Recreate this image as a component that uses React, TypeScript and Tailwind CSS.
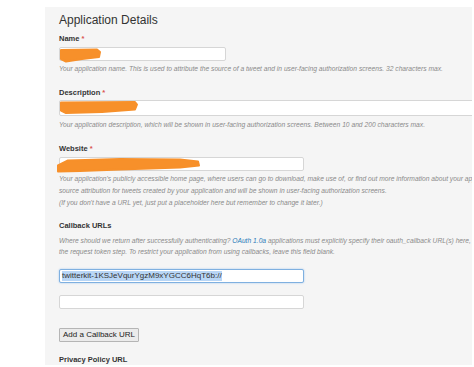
import React from "react";

function Label({ text, required = false }: { text: string; required?: boolean }) {
  return (
    <div className="text-[7.5px] leading-[10px] font-bold text-[#333]">
      {text}
      {required && <span className="text-[#d9534f]"> *</span>}
    </div>
  );
}

function Help({ children, className = "" }: { children: React.ReactNode; className?: string }) {
  return (
    <div className={`text-[6.7px] italic text-[#8a8a8a] whitespace-nowrap ${className}`}>
      {children}
    </div>
  );
}

// orange Schwärzung über dem Feldinhalt
function Redact({ points, w }: { points: string; w: number }) {
  return (
    <svg
      className="absolute left-0 top-[1px] overflow-visible"
      width={w}
      height={14}
      viewBox={`0 0 ${w} 14`}
    >
      <polygon points={points} fill="#f7902a" strokeLinejoin="round" stroke="#f7902a" strokeWidth={2} />
    </svg>
  );
}

export default function App() {
  return (
    <div className="w-[474px] h-[367px] bg-white font-['Liberation_Sans',Arial,sans-serif] pt-[7px] pl-[45px]">
      <div className="w-[427px] h-[358px] bg-[#f5f5f5] overflow-hidden pl-[14px] pt-[6px] flex flex-col">
        {/* Titel */}
        <div className="text-[12px] leading-[14px] text-[#333]">Application Details</div>

        {/* Name */}
        <div className="mt-[7px]">
          <Label text="Name" required />
        </div>
        <div className="relative mt-[3px] w-[167px] h-[16px] bg-white border border-[#d6d6d6] rounded-[2px]">
          <Redact w={42} points="1,1 37,0.5 40,3 39,8 22,10 6,12.5 1,10" />
        </div>
        <Help className="mt-[3px] leading-[10px]">
          Your application name. This is used to attribute the source of a tweet and in user-facing authorization screens. 32 characters max.
        </Help>

        {/* Description */}
        <div className="mt-[14px]">
          <Label text="Description" required />
        </div>
        <div className="relative mt-[2px] w-[430px] h-[16px] bg-white border border-[#d6d6d6] rounded-[2px] shrink-0">
          <Redact w={80} points="1,0.5 75,0 77,2.5 75,7.5 42,10 6,11 1,8.5" />
        </div>
        <Help className="mt-[4px] leading-[10px]">
          Your application description, which will be shown in user-facing authorization screens. Between 10 and 200 characters max.
        </Help>

        {/* Website */}
        <div className="mt-[14px]">
          <Label text="Website" required />
        </div>
        <div className="relative mt-[3px] w-[245px] h-[16px] bg-white border border-[#d6d6d6] rounded-[2px]">
          <Redact w={142} points="-2,6.5 8,1.5 60,0 120,0.5 138,2.5 139,6.5 120,8.5 60,10.5 20,12 -2,12.5" />
        </div>
        <Help className="mt-[2px] leading-[12px]">
          Your application's publicly accessible home page, where users can go to download, make use of, or find out more information about your application. This fully-qualified URL is used in the
          <br />
          source attribution for tweets created by your application and will be shown in user-facing authorization screens.
          <br />
          (If you don't have a URL yet, just put a placeholder here but remember to change it later.)
        </Help>

        {/* Callback URLs */}
        <div className="mt-[12px]">
          <Label text="Callback URLs" />
        </div>
        <Help className="mt-[5px] leading-[10.5px]">
          Where should we return after successfully authenticating? <span className="text-[#2b7bb9]">OAuth 1.0a</span> applications must explicitly specify their oauth_callback URL(s) here, as well as on
          <br />
          the request token step. To restrict your application from using callbacks, leave this field blank.
        </Help>
        <div className="mt-[12px] w-[245px] h-[16px] bg-white border border-[#7fb0e0] rounded-[2px] shadow-[0_0_2px_#9cc4ee] flex items-center pl-[2px]">
          <span className="text-[8px] leading-[10px] text-[#333] bg-[#b8d6f6]">
            twitterkit-1KSJeVqurYgzM9xYGCC6HqT6b://
          </span>
        </div>
        <div className="mt-[12px] w-[245px] h-[16px] bg-white border border-[#d6d6d6] rounded-[2px]" />

        {/* Knopf */}
        <div className="mt-[11px]">
          <button className="h-[14px] px-[3px] bg-[#ebebeb] border border-[#b5b5b5] rounded-[1px] text-[8px] leading-[12px] text-[#222]">
            Add a Callback URL
          </button>
        </div>

        <div className="mt-[11px]">
          <Label text="Privacy Policy URL" />
        </div>
      </div>
    </div>
  );
}
